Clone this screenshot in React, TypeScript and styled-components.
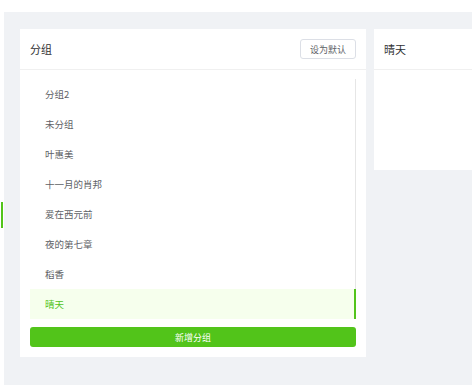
import styled, { createGlobalStyle } from 'styled-components';

const GlobalStyle = createGlobalStyle`
  html, body {
    margin: 0;
    padding: 0;
    background: #fff;
    font-family: "Noto Sans CJK SC", "Noto Sans", "Liberation Sans", sans-serif;
  }
`;

const Page = styled.div`
  display: flex;
  width: 474px;
  height: 388px;
  overflow: hidden;
`;

const SideStrip = styled.div`
  width: 4px;
  flex: none;
  background: #fff;
`;

const SideMark = styled.div`
  width: 2px;
  height: 26px;
  margin: 202px 0 0 1px;
  background: #52c41a;
`;

const Main = styled.div`
  flex: none;
  width: 468px;
  padding-top: 12px;
`;

const Content = styled.div`
  display: flex;
  align-items: flex-start;
  gap: 8px;
  height: 373px;
  box-sizing: border-box;
  padding: 17px 0 0 16px;
  background: #f0f2f5;
`;

const Card = styled.div<{ $width?: number; $height?: number }>`
  background: #fff;
  box-sizing: border-box;
  flex: ${(p) => (p.$width ? 'none' : '1')};
  width: ${(p) => (p.$width ? `${p.$width}px` : 'auto')};
  height: ${(p) => (p.$height ? `${p.$height}px` : 'auto')};
`;

const CardHeader = styled.div`
  display: flex;
  align-items: center;
  justify-content: space-between;
  height: 40px;
  padding: 0 10px;
  border-bottom: 1px solid #f0f0f0;
`;

const Title = styled.span`
  font-size: 11px;
  color: #303133;
`;

const PlainButton = styled.button`
  height: 20px;
  padding: 0 9px;
  border: 1px solid #dcdfe6;
  border-radius: 3px;
  background: #fff;
  color: #606266;
  font-family: inherit;
  font-size: 9px;
`;

const CardBody = styled.div`
  display: flex;
  flex-direction: column;
  gap: 8px;
  padding: 9px 10px 10px;
`;

const GroupList = styled.ul`
  list-style: none;
  margin: 0;
  padding: 0;
  height: 240px;
  border-right: 1px solid #e6e6e6;
`;

const GroupItem = styled.li<{ $active?: boolean }>`
  display: flex;
  align-items: center;
  height: 30px;
  padding-left: 15px;
  margin-right: ${(p) => (p.$active ? '-1px' : '0')};
  font-size: 9.5px;
  color: ${(p) => (p.$active ? '#52c41a' : '#606266')};
  background: ${(p) => (p.$active ? '#f6ffed' : 'transparent')};
  box-shadow: ${(p) => (p.$active ? 'inset -2px 0 0 #52c41a' : 'none')};
  cursor: pointer;
`;

const PrimaryButton = styled.button`
  height: 20px;
  border: none;
  border-radius: 3px;
  background: #52c41a;
  color: #fff;
  font-family: inherit;
  font-size: 9px;
`;

const groups = ['分组2', '未分组', '叶惠美', '十一月的肖邦', '爱在西元前', '夜的第七章', '稻香', '晴天'];

export default function App() {
  const active = '晴天';

  return (
    <>
      <GlobalStyle />
      <Page>
        <SideStrip>
          <SideMark />
        </SideStrip>
        <Main>
          <Content>
            <Card $width={346} $height={328}>
              <CardHeader>
                <Title>分组</Title>
                <PlainButton>设为默认</PlainButton>
              </CardHeader>
              <CardBody>
                <GroupList>
                  {groups.map((g) => (
                    <GroupItem key={g} $active={g === active}>
                      {g}
                    </GroupItem>
                  ))}
                </GroupList>
                <PrimaryButton>新增分组</PrimaryButton>
              </CardBody>
            </Card>
            <Card $height={141}>
              <CardHeader>
                <Title>{active}</Title>
              </CardHeader>
            </Card>
          </Content>
        </Main>
      </Page>
    </>
  );
}
